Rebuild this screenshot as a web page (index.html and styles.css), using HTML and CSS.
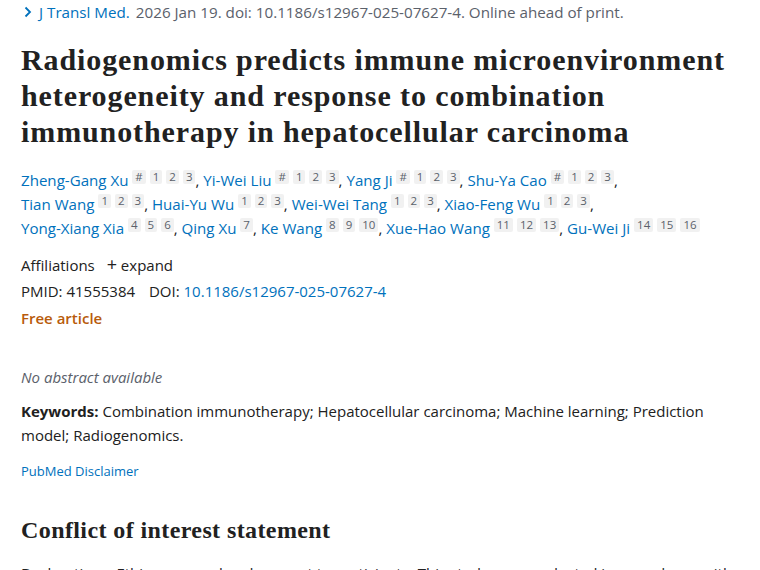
FILE: index.html
```html
<!DOCTYPE html>
<html>
<head>
<meta charset="utf-8">
<link rel="stylesheet" href="styles.css">
</head>
<body>
<main class="article">
  <div class="cit">
    <svg class="chev" width="10" height="12" viewBox="0 0 10 12"><path d="M2.5 1.5 L7 6 L2.5 10.5" fill="none" stroke="#0071bc" stroke-width="1.8"/></svg>
    <a class="journal" href="#">J Transl Med.</a> <span class="cit-text">2026 Jan 19. doi: 10.1186/s12967-025-07627-4. Online ahead of print.</span>
  </div>

  <h1 class="title">Radiogenomics predicts immune microenvironment heterogeneity and response to combination immunotherapy in hepatocellular carcinoma</h1>

  <div class="authors">
    <span class="author"><a href="#">Zheng-Gang Xu</a> <sup class="refs"><span class="ref">#</span><span class="ref">1</span><span class="ref">2</span><span class="ref">3</span></sup></span>,
    <span class="author"><a href="#">Yi-Wei Liu</a> <sup class="refs"><span class="ref">#</span><span class="ref">1</span><span class="ref">2</span><span class="ref">3</span></sup></span>,
    <span class="author"><a href="#">Yang Ji</a> <sup class="refs"><span class="ref">#</span><span class="ref">1</span><span class="ref">2</span><span class="ref">3</span></sup></span>,
    <span class="author"><a href="#">Shu-Ya Cao</a> <sup class="refs"><span class="ref">#</span><span class="ref">1</span><span class="ref">2</span><span class="ref">3</span></sup></span>,
    <span class="author"><a href="#">Tian Wang</a> <sup class="refs"><span class="ref">1</span><span class="ref">2</span><span class="ref">3</span></sup></span>,
    <span class="author"><a href="#">Huai-Yu Wu</a> <sup class="refs"><span class="ref">1</span><span class="ref">2</span><span class="ref">3</span></sup></span>,
    <span class="author"><a href="#">Wei-Wei Tang</a> <sup class="refs"><span class="ref">1</span><span class="ref">2</span><span class="ref">3</span></sup></span>,
    <span class="author"><a href="#">Xiao-Feng Wu</a> <sup class="refs"><span class="ref">1</span><span class="ref">2</span><span class="ref">3</span></sup></span>,
    <span class="author"><a href="#">Yong-Xiang Xia</a> <sup class="refs"><span class="ref">4</span><span class="ref">5</span><span class="ref">6</span></sup></span>,
    <span class="author"><a href="#">Qing Xu</a> <sup class="refs"><span class="ref">7</span></sup></span>,
    <span class="author"><a href="#">Ke Wang</a> <sup class="refs"><span class="ref">8</span><span class="ref">9</span><span class="ref">10</span></sup></span>,
    <span class="author"><a href="#">Xue-Hao Wang</a> <sup class="refs"><span class="ref">11</span><span class="ref">12</span><span class="ref">13</span></sup></span>,
    <span class="author"><a href="#">Gu-Wei Ji</a> <sup class="refs"><span class="ref">14</span><span class="ref">15</span><span class="ref">16</span></sup></span>
  </div>

  <div class="affil">Affiliations <span class="expand"><span class="plus">+</span> expand</span></div>
  <div class="ids">PMID: 41555384 <span class="doi-label">DOI:</span> <a href="#">10.1186/s12967-025-07627-4</a></div>
  <div class="free">Free article</div>

  <p class="noabs">No abstract available</p>

  <p class="keywords"><strong>Keywords:</strong> Combination immunotherapy; Hepatocellular carcinoma; Machine learning; Prediction model; Radiogenomics.</p>

  <a class="disclaimer" href="#">PubMed Disclaimer</a>

  <h2 class="section">Conflict of interest statement</h2>
  <p class="coi">Declarations. Ethics approval and consent to participate: This study was conducted in accordance with</p>
</main>
</body>
</html>
```

FILE: styles.css
```css
html, body {
  margin: 0;
  padding: 0;
  background: #fff;
}
body {
  font-family: "Open Sans", "Noto Sans", sans-serif;
  color: #212121;
  font-size: 15px;
}
a {
  color: #0071bc;
  text-decoration: none;
}
.article {
  padding: 0 21px;
  width: 718px;
}
.cit {
  margin-top: 2px;
  line-height: 20px;
  color: #5b616b;
  font-size: 15.2px;
  display: flex;
  align-items: center;
  gap: 6px;
  white-space: nowrap;
}
.cit .chev { flex: none; margin-right: 0; margin-left: 2px; }
.title {
  font-family: "Liberation Serif", serif;
  font-weight: bold;
  font-size: 30px;
  letter-spacing: 0.9px;
  line-height: 36px;
  margin: 20px 0 0;
  color: #212121;
}
.authors {
  margin-top: 18px;
  line-height: 24px;
  font-size: 15.1px;
}
.author { white-space: nowrap; }
.refs {
  font-size: 11.5px;
  vertical-align: 5px;
  line-height: 1;
}
.ref {
  display: inline-block;
  background: #f1f1f1;
  color: #5b616b;
  padding: 1px 3px;
  margin-right: 4px;
  border-radius: 2px;
}
.ref:last-child { margin-right: 0; }
.affil {
  margin-top: 13px;
  line-height: 24px;
}
.expand { margin-left: 8px; }
.plus { font-size: 18px; line-height: 1; }
.ids {
  line-height: 24px;
  margin-top: 2px;
}
.doi-label { margin-left: 10px; }
.free {
  color: #b85b0b;
  font-weight: 600;
  line-height: 24px;
  margin-top: 3px;
}
.noabs {
  font-style: italic;
  color: #5b616b;
  margin: 35px 0 0;
  line-height: 24px;
}
.keywords {
  margin: 10px 0 0;
  line-height: 24px;
}
.keywords strong { font-weight: 700; }
.disclaimer {
  display: block;
  font-size: 13px;
  margin-top: 12px;
  line-height: 24px;
}
.section {
  font-family: "Liberation Serif", serif;
  font-weight: bold;
  font-size: 24px;
  letter-spacing: 0.4px;
  line-height: 30px;
  margin: 32px 0 0;
}
.coi {
  margin: 16px 0 0;
  line-height: 24px;
}
```
